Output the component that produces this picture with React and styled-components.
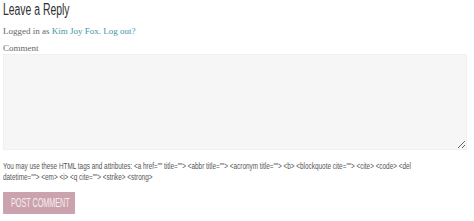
import React from 'react';
import styled, { createGlobalStyle } from 'styled-components';

const GlobalStyle = createGlobalStyle`
  body {
    margin: 0;
    background: #fff;
  }
`;

const StyledRespond = styled.div`
  padding: 0 7px 0 3px;
  overflow: hidden;
`;

// narrow "Dosis"-like text: Liberation Sans squeezed horizontally
const StyledNarrow = styled.span`
  display: inline-block;
  transform: scaleX(${(p) => p.$scale});
  transform-origin: left top;
  white-space: nowrap;
`;

const StyledTitle = styled.h3`
  margin: 0;
  padding-top: 1px;
  font-family: 'Liberation Sans', Arial, sans-serif;
  font-weight: 400;
  font-size: 16px;
  line-height: 18px;
  color: #2f2f2f;
`;

const StyledLoggedIn = styled.p`
  margin: 6px 0 0;
  font-family: 'Liberation Serif', serif;
  font-size: 9px;
  line-height: 12px;
  color: #666;
`;

const StyledLink = styled.a`
  color: #3f97a5;
  text-decoration: none;
`;

const StyledLabel = styled.label`
  display: block;
  margin-top: 5px;
  font-family: 'Liberation Serif', serif;
  font-size: 9px;
  line-height: 12px;
  color: #666;
`;

const StyledTextarea = styled.textarea`
  display: block;
  box-sizing: border-box;
  width: 100%;
  height: 96px;
  margin: 0;
  background: #f6f6f6;
  border: 1px solid #f0f0f0;
  border-radius: 0;
  outline: none;
`;

const StyledAllowed = styled.p`
  margin: 11px 0 0;
  width: calc(${(p) => p.$width}px / ${(p) => p.$scale});
  transform: scaleX(${(p) => p.$scale});
  transform-origin: left top;
  font-family: 'Liberation Sans', Arial, sans-serif;
  font-size: 9px;
  line-height: 11px;
  color: #555;
`;

const StyledSubmit = styled.button`
  display: block;
  margin-top: 9px;
  width: 72px;
  height: 22px;
  padding: 0 0 0 8px;
  border: none;
  background: #caa3ae;
  color: #f8eef0;
  text-align: left;
  font-family: 'Liberation Sans', Arial, sans-serif;
  font-size: 12px;
  line-height: 22px;
  text-transform: uppercase;
`;

const allowedTags =
  'You may use these HTML tags and attributes: <a href="" title=""> <abbr title=""> <acronym title=""> <b> <blockquote cite=""> <cite> <code> <del datetime=""> <em> <i> <q cite=""> <strike> <strong>';

const App = () => {
  return (
    <>
      <GlobalStyle />
      <StyledRespond>
        <StyledTitle>
          <StyledNarrow $scale={0.65}>Leave a Reply</StyledNarrow>
        </StyledTitle>
        <StyledLoggedIn>
          Logged in as <StyledLink href="#">Kim Joy Fox</StyledLink>.{' '}
          <StyledLink href="#">Log out?</StyledLink>
        </StyledLoggedIn>
        <StyledLabel htmlFor="comment">Comment</StyledLabel>
        <StyledTextarea id="comment" />
        <StyledAllowed $scale={0.71} $width={442}>
          {allowedTags}
        </StyledAllowed>
        <StyledSubmit type="submit">
          <StyledNarrow $scale={0.6}>Post Comment</StyledNarrow>
        </StyledSubmit>
      </StyledRespond>
    </>
  );
};

export default App;
